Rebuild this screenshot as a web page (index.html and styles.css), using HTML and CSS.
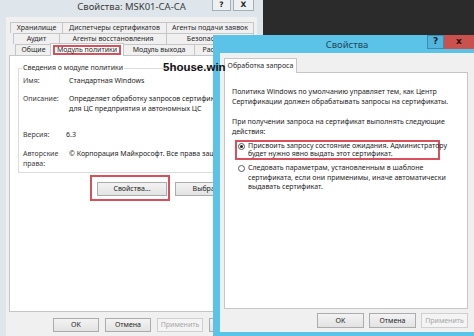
FILE: index.html
```html
<!DOCTYPE html>
<html lang="ru">
<head>
<meta charset="utf-8">
<title>Свойства</title>
<link rel="stylesheet" href="styles.css">
</head>
<body>
<div class="win back">
  <div class="titlebar">
    <div></div>
    <div class="title">Свойства: MSK01-CA-CA</div>
    <div class="caps"><span class="cap help">?</span><span class="cap close">X</span></div>
  </div>
  <div class="client">
    <div class="tabrow row1">
      <span class="tab">Хранилище</span>
      <span class="tab">Диспетчеры сертификатов</span>
      <span class="tab">Агенты подачи заявок</span>
    </div>
    <div class="tabrow row2">
      <span class="tab">Аудит</span>
      <span class="tab">Агенты восстановления</span>
      <span class="tab">Безопасность</span>
    </div>
    <div class="tabrow row3">
      <span class="tab">Общие</span>
      <span class="tab sel"><span class="hl tabhl">Модуль политики</span></span>
      <span class="tab">Модуль выхода</span>
      <span class="tab">Расширения</span>
    </div>
    <div class="panel">
      <fieldset class="group">
        <legend>Сведения о модуле политики</legend>
        <div class="prop r-name"><span class="lbl">Имя:</span><span class="val">Стандартная Windows</span></div>
        <div class="prop r-desc"><span class="lbl">Описание:</span><span class="val">Определяет обработку запросов сертификатов<br>для ЦС предприятия и автономных ЦС</span></div>
        <div class="prop r-ver"><span class="lbl">Версия:</span><span class="val ver">6.3</span></div>
        <div class="prop r-copy"><span class="lbl">Авторские<br>права:</span><span class="val">© Корпорация Майкрософт. Все права защищены.</span></div>
      </fieldset>
      <div class="actions">
        <div class="hl btnhl"><button class="btn wide">Свойства...</button></div>
        <button class="btn wide sel-btn">Выбрать...</button>
      </div>
    </div>
    <div class="footer">
      <button class="btn">OK</button>
      <button class="btn">Отмена</button>
      <button class="btn dis">Применить</button>
      <button class="btn">Справка</button>
    </div>
  </div>
</div>

<div class="win front">
  <div class="titlebar">
    <div></div>
    <div class="title">Свойства</div>
    <div class="caps"><span class="cap help">?</span><span class="cap close">x</span></div>
  </div>
  <div class="client">
    <div class="tabrow"><span class="tab sel">Обработка запроса</span></div>
    <div class="panel">
      <p>Политика Windows по умолчанию управляет тем, как Центр<br>Сертификации должен обрабатывать запросы на сертификаты.</p>
      <p>При получении запроса на сертификат выполнять следующие<br>действия:</p>
      <div class="hl opt opt-hl">
        <span class="radio checked"></span>
        <span>Присвоить запросу состояние ожидания. Администратору<br>будет нужно явно выдать этот сертификат.</span>
      </div>
      <div class="opt opt-2">
        <span class="radio"></span>
        <span>Следовать параметрам, установленным в шаблоне<br>сертификата, если они применимы, иначе автоматически<br>выдавать сертификат.</span>
      </div>
    </div>
    <div class="footer">
      <button class="btn">OK</button>
      <button class="btn">Отмена</button>
      <button class="btn dis">Применить</button>
    </div>
  </div>
</div>

<div class="watermark">5house.win</div>
</body>
</html>
```
FILE: styles.css
```css
* { box-sizing: border-box; margin: 0; padding: 0; }
html, body { width: 474px; height: 336px; overflow: hidden; }
body {
  position: relative;
  background: #2b2b2b;
  font-family: "Noto Sans", "Open Sans", sans-serif;
  font-size: 7px;
  line-height: 9.5px;
  color: #1e1e1e;
}
button { font: inherit; color: inherit; }

.win { position: absolute; display: flex; flex-direction: column; }
.titlebar { display: grid; grid-template-columns: 1fr auto 1fr; flex: none; }
.title { font-size: 9.5px; white-space: nowrap; }
.caps { display: flex; justify-self: end; align-items: flex-start; }
.cap {
  display: flex; align-items: center; justify-content: center;
  font-family: "DejaVu Sans", sans-serif; font-weight: bold;
}

/* back window */
.back { left: 0; top: 0; width: 263px; height: 346px; background: #dfe6eb; padding: 0 6px; }
.back .titlebar { height: 17px; }
.back .title { line-height: 13px; color: #3a3a3a; }
.back .caps { gap: 2px; margin-right: 3px; }
.back .cap { height: 11px; border: 1px solid #a5afb6; border-top: none; background: #eef1f3; font-size: 7.5px; color: #222; }
.back .help { width: 19px; }
.back .close { width: 21px; }
.back .client { flex: 1; background: #f0f0f0; padding: 5px 2px 0 3px; display: flex; flex-direction: column; }

.tabrow { display: flex; height: 11px; flex: none; }
.tab {
  display: flex; align-items: center; justify-content: center;
  border: 1px solid #c6c6c6; border-bottom: none;
  background: #f0f0f0; white-space: nowrap; overflow: hidden;
  margin-right: -1px; flex: none; height: 11px; color: #2a2a2a;
}
.row1 { margin-left: 1px; }
.row1 .tab:nth-child(1) { width: 53px; }
.row1 .tab:nth-child(2) { width: 105px; }
.row1 .tab:nth-child(3) { width: 88px; }
.row2 { margin-left: 4px; }
.row2 .tab:nth-child(1) { width: 47px; }
.row2 .tab:nth-child(2) { width: 108px; }
.row2 .tab:nth-child(3) { width: 88px; }
.row3 { margin-left: 6px; }
.row3 .tab:nth-child(1) { width: 37px; margin-right: -2px; }
.row3 .tab:nth-child(2) { width: 74px; }
.row3 .tab:nth-child(3) { width: 72px; }
.row3 .tab:nth-child(4) { width: 60px; }
.tab.sel { background: #fff; position: relative; z-index: 1; }
.row3 .tab.sel { height: 13px; margin-top: -1px; }

.hl { border: 2px solid #d9505c; }
.tabhl { padding: 0 2px; line-height: 6px; height: 10px; display: flex; align-items: center; margin-top: 0; }

.back .panel {
  flex: none; height: 257px; background: #fff;
  border: 1px solid #c6c6c6; padding: 7px 0 0 8px; overflow: hidden;
}
.group { border: 1px solid #dcdcdc; padding: 3px 0 3.75px 3px; width: 262px; min-width: 0; }
.group legend { padding: 0 1px; line-height: 10px; color: #2a2a2a; }
.prop { display: flex; white-space: nowrap; margin-left: 1px; }
.lbl { width: 46px; flex: none; color: #3a3a3a; }
.r-name { margin-bottom: 8.5px; }
.r-desc { margin-bottom: 17px; }
.r-ver { margin-bottom: 9.5px; }
.ver { margin-left: -3px; }

.actions { display: flex; align-items: flex-start; gap: 5px; margin: 2px 0 0 72px; }
.btnhl { padding: 5px 1px 3px 5px; }
.btn {
  display: flex; align-items: center; justify-content: center;
  width: 46px; height: 14px; flex: none;
  border: 1px solid #acacac; background: linear-gradient(#f3f3f3, #e3e3e3);
  color: #1e1e1e; white-space: nowrap;
}
.btn.wide { width: 70px; }
.sel-btn { margin-top: 7px; }
.btn.dis { color: #a6a6a6; border-color: #d0d0d0; background: #f4f4f4; }
.back .footer { display: flex; justify-content: flex-end; gap: 6px; padding-top: 6px; }

/* front window */
.front { left: 213px; top: 35px; width: 268px; height: 304px; background: #5cc3e8; padding: 0 7px 7px; z-index: 2; }
.front .titlebar { height: 18px; grid-template-rows: 18px; }
.front .title { line-height: 20px; color: #23465a; }
.front .cap { height: 14px; font-size: 9px; }
.front .help { width: 17px; background: #52b6dc; border: 1px solid #3b8db0; color: #10222b; }
.front .close { width: 30px; background: #c9524f; color: #2e1010; }
.front .client { flex: 1; background: #f0f0f0; padding: 5px 6px 4px 4px; display: flex; flex-direction: column; }
.front .tabrow { height: 14px; }
.front .tab.sel { width: 73px; height: 15px; }
.front .panel {
  flex: none; height: 237px; background: #fff;
  border: 1px solid #c6c6c6; padding: 14px 0 0 7px;
}
.front p { white-space: nowrap; line-height: 10px; }
.front p + p { margin-top: 10px; }
.opt { display: flex; gap: 3px; white-space: nowrap; }
.opt-hl { margin: 3px 0 0 3px; width: 205px; padding-left: 1px; line-height: 8px; }
.opt-2 { margin: 3px 0 0 6px; }
.radio {
  width: 7px; height: 7px; border-radius: 50%; flex: none;
  border: 1px solid #5a5a5a; background: #fff; margin-top: 1px;
  display: flex; align-items: center; justify-content: center;
}
.opt-2 .radio { margin-top: 1.5px; }
.radio.checked::after { content: ""; width: 3px; height: 3px; border-radius: 50%; background: #222; }
.front .footer { display: flex; justify-content: flex-end; gap: 5px; margin-top: 4px; }
.front .btn { width: 47px; height: 15px; }

.watermark {
  position: absolute; left: 163px; top: 61px; z-index: 5;
  font-family: "Liberation Sans", sans-serif; font-weight: bold;
  font-size: 11.5px; line-height: 12px; color: #111;
}
```
